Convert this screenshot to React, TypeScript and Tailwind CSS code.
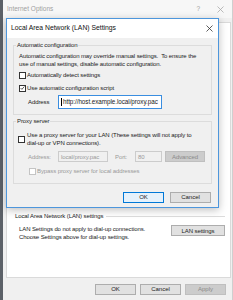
import React from 'react';

const font = { fontFamily: '"Liberation Sans", Arial, sans-serif' };

const Check = ({ checked = false, disabled = false }: { checked?: boolean; disabled?: boolean }) => (
  <div
    className={`w-[7px] h-[7px] shrink-0 border bg-white flex items-center justify-center ${
      disabled ? 'border-[#c4c4c4]' : 'border-[#333333]'
    }`}
  >
    {checked && (
      <svg width="6" height="6" viewBox="0 0 6 6">
        <path d="M0.8 3.1 L2.3 4.6 L5.2 1.2" fill="none" stroke="#222" strokeWidth="0.9" />
      </svg>
    )}
  </div>
);

const Btn = ({
  label,
  primary = false,
  disabled = false,
  className = '',
}: {
  label: string;
  primary?: boolean;
  disabled?: boolean;
  className?: string;
}) => (
  <div
    className={`flex items-center justify-center border text-[6px] ${
      disabled
        ? 'bg-[#cccccc] border-[#bfbfbf] text-[#8a8a8a]'
        : primary
        ? 'bg-[#e5f1fb] border-[#0078d7] text-[#222]'
        : 'bg-[#e1e1e1] border-[#adadad] text-[#222]'
    } ${className}`}
  >
    {label}
  </div>
);

const LanDialog = () => (
  <div className="absolute left-[3px] top-[18px] w-[213px] h-[190px] border border-[#4d96dc] bg-[#f0f0f0] flex flex-col shadow-[0_2px_8px_rgba(0,0,0,0.25)]">
    {/* title */}
    <div className="h-[19px] bg-white flex items-center justify-between pl-[4px] pr-[5px] text-[6.8px] text-[#111]">
      <span>Local Area Network (LAN) Settings</span>
      <svg width="7" height="7" viewBox="0 0 7 7">
        <path d="M0.5 0.5 L6.5 6.5 M6.5 0.5 L0.5 6.5" stroke="#333" strokeWidth="0.8" />
      </svg>
    </div>

    <div className="flex flex-col px-[6px] pt-[2px]">
      {/* Automatic configuration */}
      <div className="relative border border-[#dcdcdc] mt-[5px] h-[70px] pl-[5px] pr-[3px] pt-[6px] text-[6px] tracking-[-0.1px] leading-[8px] text-[#1a1a1a]">
        <span className="absolute -top-[5px] left-[2px] bg-[#f0f0f0] px-[1px]">Automatic configuration</span>
        <div>Automatic configuration may override manual settings.&nbsp; To ensure the</div>
        <div>use of manual settings, disable automatic configuration.</div>
        <div className="flex items-center gap-[1px] mt-[3px]">
          <Check />
          <span>Automatically detect settings</span>
        </div>
        <div className="flex items-center gap-[1px] mt-[5px]">
          <Check checked />
          <span>Use automatic configuration script</span>
        </div>
        <div className="flex items-center mt-[3px] pl-[9px]">
          <span className="w-[30px]">Address</span>
          <div className="w-[104px] h-[14px] border border-[#3a8ee0] bg-white flex items-center pl-[2px] text-[6.3px] tracking-[-0.05px] overflow-hidden">
            <span className="w-px h-[8px] bg-black mr-[1px] shrink-0" />
            http://host.example.local/proxy.pac
          </div>
        </div>
      </div>

      {/* Proxy server */}
      <div className="relative border border-[#dcdcdc] mt-[6px] h-[63px] pl-[4px] pr-[3px] pt-[9px] text-[6px] tracking-[-0.1px] leading-[8px] text-[#1a1a1a]">
        <span className="absolute -top-[5px] left-[2px] bg-[#f0f0f0] px-[1px]">Proxy server</span>
        <div className="flex items-center gap-[2px]">
          <Check />
          <div>
            <div>Use a proxy server for your LAN (These settings will not apply to</div>
            <div>dial-up or VPN connections).</div>
          </div>
        </div>
        <div className="flex items-center mt-[4px] pl-[10px] text-[#9a9a9a]">
          <span className="w-[30px]">Address:</span>
          <div className="w-[50px] h-[11px] border border-[#cccccc] bg-[#f0f0f0] flex items-center pl-[2px]">local/proxy.pac</div>
          <span className="ml-[7px] w-[20px]">Port:</span>
          <div className="w-[27px] h-[11px] border border-[#cccccc] bg-[#f0f0f0] flex items-center pl-[2px]">80</div>
          <Btn label="Advanced" disabled className="ml-[3px] w-[40px] h-[11px]" />
        </div>
        <div className="flex items-center gap-[1px] mt-[5px] pl-[11px] text-[#9a9a9a]">
          <Check disabled />
          <span>Bypass proxy server for local addresses</span>
        </div>
      </div>

      <div className="flex justify-end gap-[6px] mt-[8px] pr-[1px]">
        <Btn label="OK" primary className="w-[41px] h-[11px]" />
        <Btn label="Cancel" className="w-[41px] h-[11px]" />
      </div>
    </div>
  </div>
);

export default function App() {
  return (
    <div className="w-[233px] h-[300px] flex overflow-hidden whitespace-nowrap" style={font}>
      <div className="w-[3px] bg-[#5c6168]" />
      <div className="relative flex-1 h-[300px] bg-[#f0f0f0] flex flex-col border-r border-[#cfcfcf]">
        {/* title bar */}
        <div className="h-[18px] bg-[#f7f7f7] flex items-center justify-between pl-[4px] pr-[8px] text-[6.5px] text-[#a0a0a0]">
          <span>Internet Options</span>
          <div className="flex items-center gap-[17px]">
            <span>?</span>
            <svg width="7" height="7" viewBox="0 0 7 7">
              <path d="M0.5 0.5 L6.5 6.5 M6.5 0.5 L0.5 6.5" stroke="#aaa" strokeWidth="0.8" />
            </svg>
          </div>
        </div>

        {/* tab page */}
        <div className="mt-[4px] ml-[3px] mr-[1px] h-[256px] bg-white border border-[#dadada] pt-[189px] pl-[8px] pr-[5px] text-[6px] tracking-[-0.1px] leading-[8px] text-[#1a1a1a]">
          <div className="flex items-center gap-[3px]">
            <span>Local Area Network (LAN) settings</span>
            <div className="flex-1 h-px bg-[#dcdcdc]" />
          </div>
          <div className="flex items-start justify-between mt-[2px] pl-[4px]">
            <div className="pt-[3px]">
              <div>LAN Settings do not apply to dial-up connections.</div>
              <div>Choose Settings above for dial-up settings.</div>
            </div>
            <Btn label="LAN settings" className="w-[54px] h-[11px] mt-[3px]" />
          </div>
        </div>

        {/* bottom buttons */}
        <div className="flex justify-end gap-[4px] mt-[6px] pr-[6px]">
          <Btn label="OK" className="w-[41px] h-[11px]" />
          <Btn label="Cancel" className="w-[41px] h-[11px]" />
          <Btn label="Apply" disabled className="w-[41px] h-[11px]" />
        </div>

        <LanDialog />
      </div>
    </div>
  );
}
